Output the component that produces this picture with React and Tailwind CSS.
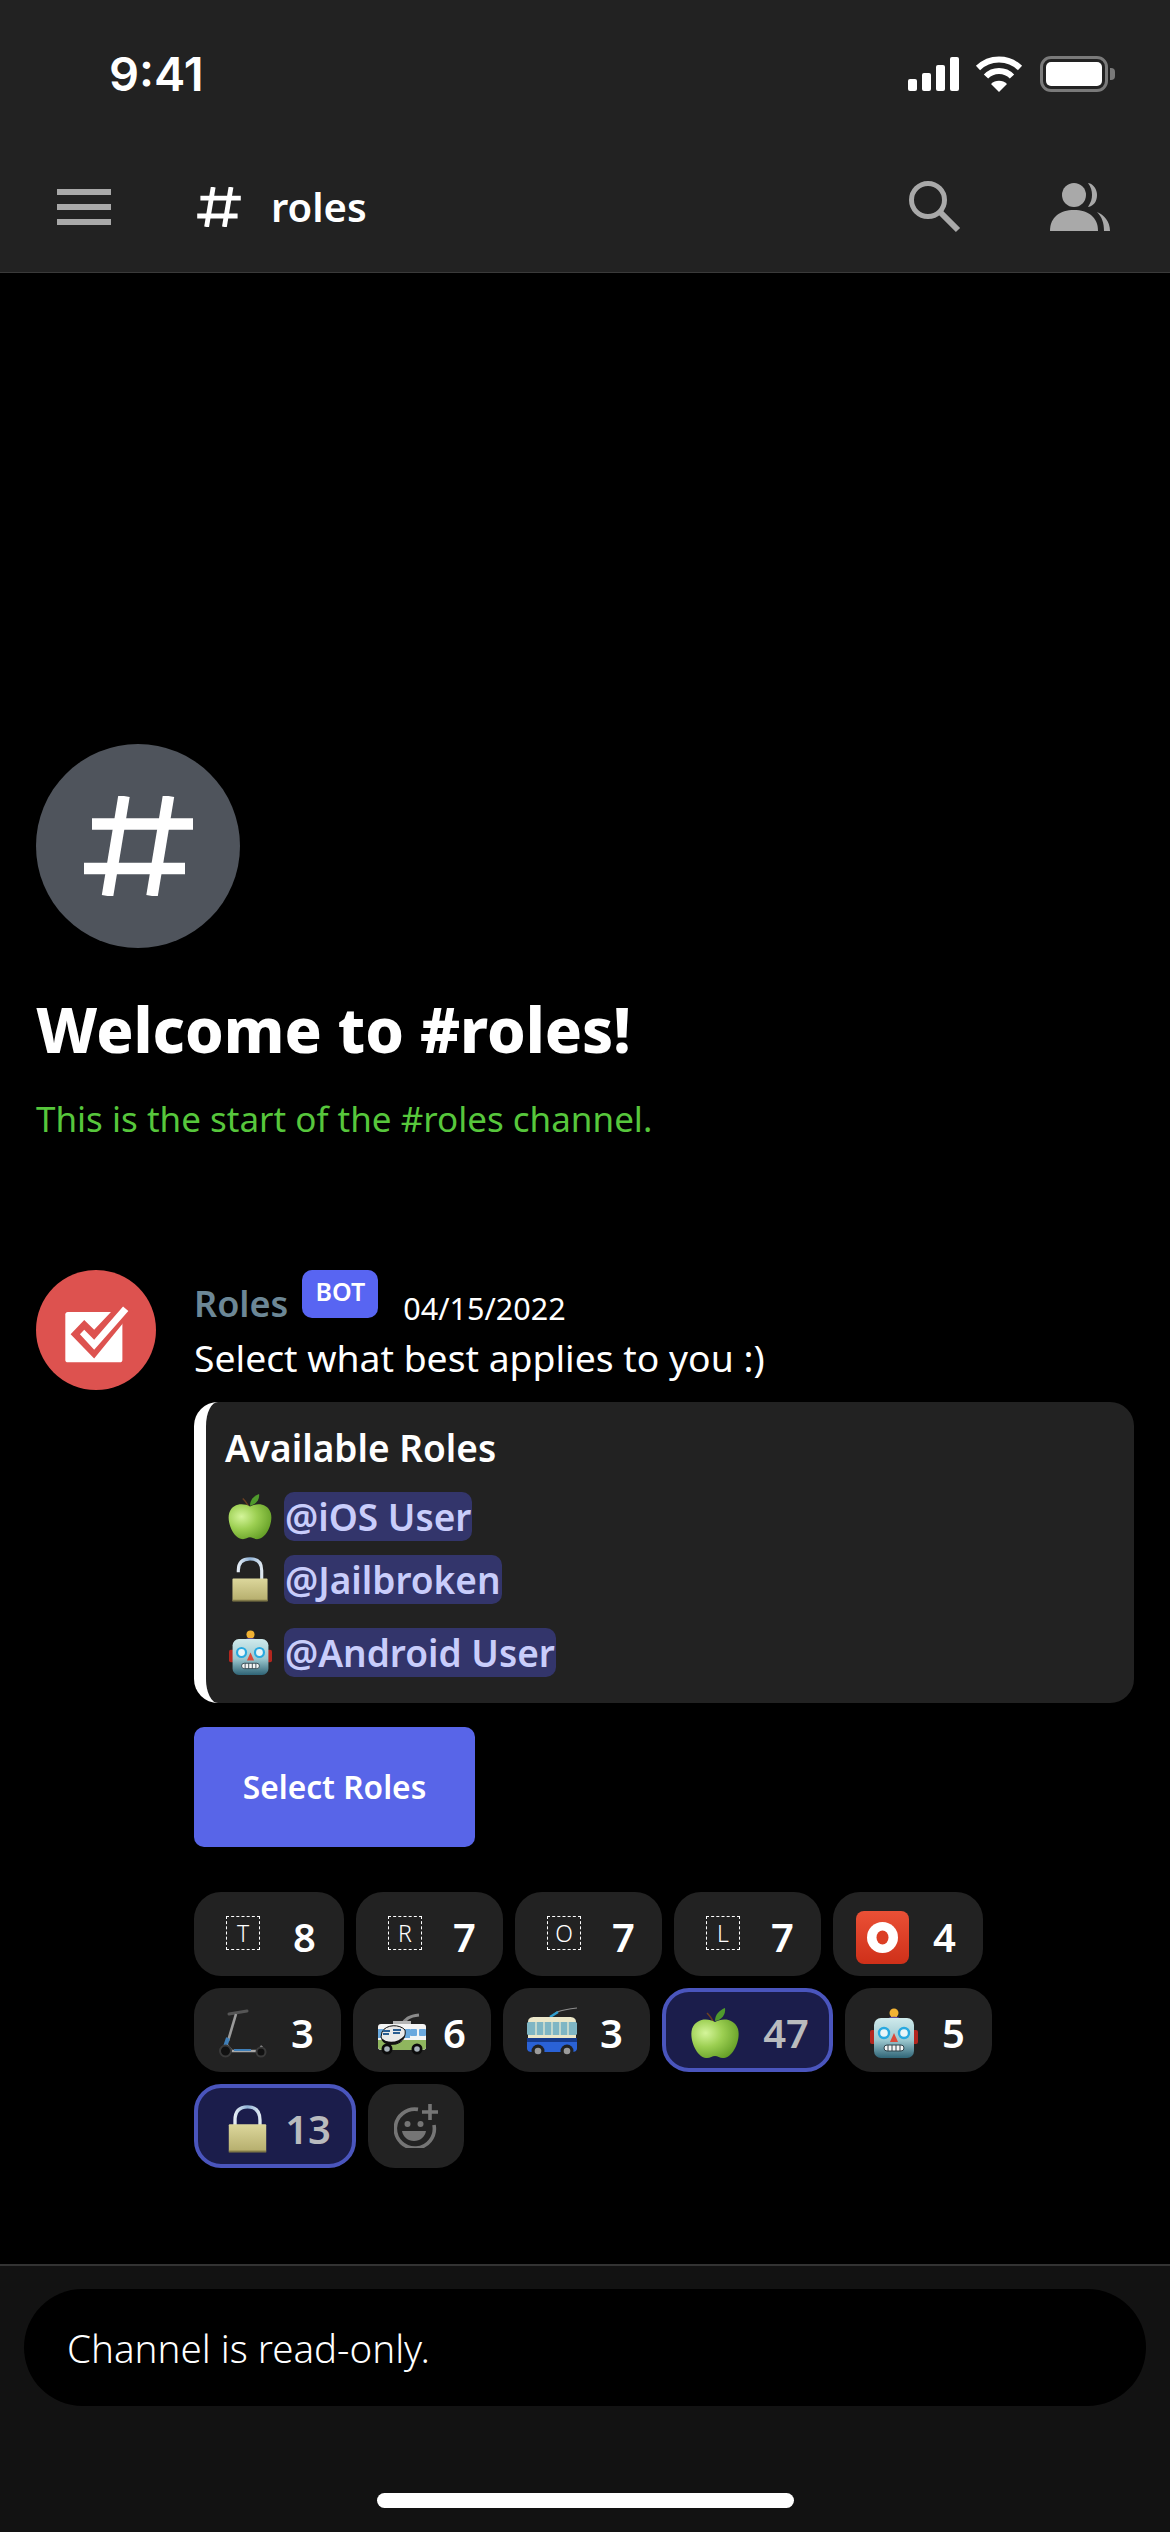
const FONT = "font-['Noto_Sans',sans-serif]";

function Apple({ className }) {
  return (
    <svg viewBox="0 0 48 52" className={className}>
      <defs>
        <radialGradient id="appleG" cx="0.3" cy="0.35" r="0.8">
          <stop offset="0" stopColor="#d4f59a" />
          <stop offset="0.45" stopColor="#9ccf52" />
          <stop offset="1" stopColor="#5f9a22" />
        </radialGradient>
      </defs>
      <path d="M22 15 C21 11 19 9 16 6" stroke="#6b3f22" strokeWidth="1.6" fill="none" />
      <path d="M24 14 C24 7 29 3 34 1 C35 7 31 13 24 14Z" fill="#4f9a2c" />
      <path d="M24 15 C17 11 5 11 1 22 C-2 33 6 50 15 51 C19 51.500 21 49 24 49 C27 49 29 51.500 33 51 C42 50 50 33 47 22 C43 11 31 11 24 15Z" fill="url(#appleG)" />
    </svg>
  );
}

function Lock({ open, className }) {
  return (
    <svg viewBox="0 0 40 50" className={className}>
      <defs>
        <linearGradient id={open ? "lockA" : "lockB"} x1="0" y1="0" x2="0" y2="1">
          <stop offset="0" stopColor="#dcd79c" />
          <stop offset="1" stopColor="#b5ad6c" />
        </linearGradient>
        <linearGradient id={open ? "shackA" : "shackB"} x1="0" y1="0" x2="1" y2="0">
          <stop offset="0" stopColor="#e4ecf4" />
          <stop offset="0.5" stopColor="#8fb2d6" />
          <stop offset="1" stopColor="#dfe8f0" />
        </linearGradient>
      </defs>
      {open ? (
        <path d="M7 17 L7 15 C7 6 12 2 20 2 C28 2 33 6 33 15 L33 26" fill="none" stroke="url(#shackA)" strokeWidth="3.500" />
      ) : (
        <path d="M7 24 L7 16 C7 6 12 2 20 2 C28 2 33 6 33 16 L33 24" fill="none" stroke="url(#shackB)" strokeWidth="3.500" />
      )}
      <rect x="0.500" y={open ? 24 : 20} width="39" height={open ? 25 : 29} rx="1" fill={open ? "url(#lockA)" : "url(#lockB)"} />
      <rect x="0.500" y="47.500" width="39" height="2" fill="#7f7848" />
    </svg>
  );
}

function Robot({ className }) {
  return (
    <svg viewBox="0 0 48 50" className={className}>
      <defs>
        <linearGradient id="robotG" x1="0" y1="0" x2="0" y2="1">
          <stop offset="0" stopColor="#cfeaec" />
          <stop offset="0.55" stopColor="#9cc8cf" />
          <stop offset="1" stopColor="#2f6476" />
        </linearGradient>
      </defs>
      <rect x="0" y="22" width="6" height="14" rx="2" fill="#b3261e" />
      <rect x="42" y="22" width="6" height="14" rx="2" fill="#b3261e" />
      <circle cx="24" cy="5" r="4.500" fill="#f2b233" />
      <path d="M18 11 C18 8 30 8 30 11 L30 13 L18 13Z" fill="#5b4a9c" />
      <rect x="4" y="10" width="40" height="40" rx="7" fill="url(#robotG)" />
      <circle cx="14" cy="25" r="5" fill="#eaf6f8" stroke="#29a9e0" strokeWidth="2.400" />
      <circle cx="34" cy="25" r="5" fill="#eaf6f8" stroke="#29a9e0" strokeWidth="2.400" />
      <path d="M24 25 L28 34 L20 34Z" fill="#dc4a3a" />
      <rect x="14" y="37" width="20" height="6" rx="3" fill="#f3f5f5" stroke="#30454d" strokeWidth="1" />
      <path d="M18 37v6M22 37v6M26 37v6M30 37v6" stroke="#30454d" strokeWidth="1" />
    </svg>
  );
}

function OButton({ className }) {
  return (
    <svg viewBox="0 0 53 53" className={className}>
      <defs>
        <linearGradient id="oG" x1="0" y1="0" x2="0" y2="1">
          <stop offset="0" stopColor="#ea5036" />
          <stop offset="1" stopColor="#cf3019" />
        </linearGradient>
      </defs>
      <rect width="53" height="53" rx="8" fill="url(#oG)" />
      <circle cx="26.500" cy="26.500" r="15.500" fill="#fff" />
      <ellipse cx="26.500" cy="26.500" rx="6" ry="7" fill="#dc3e24" />
    </svg>
  );
}

function Scooter({ className }) {
  return (
    <svg viewBox="0 0 48 50" className={className}>
      <path d="M10 6 L28 3" stroke="#555" strokeWidth="3" strokeLinecap="round" />
      <path d="M17 6 L9 33" stroke="#9a9a9a" strokeWidth="2.600" />
      <path d="M9 30 L6 39" stroke="#3f7fb8" strokeWidth="4" />
      <path d="M8 37 L13 43 L39 43 L43 38" stroke="#a8a8a8" strokeWidth="2.400" fill="none" />
      <path d="M15 42 L32 42" stroke="#3f7fb8" strokeWidth="2" />
      <circle cx="6.500" cy="43" r="5.500" fill="#111" stroke="#3a3a3a" strokeWidth="2" />
      <circle cx="42" cy="44" r="4.500" fill="#111" stroke="#3a3a3a" strokeWidth="2" />
    </svg>
  );
}

function GreenBus({ className }) {
  return (
    <svg viewBox="0 0 48 44" className={className}>
      <path d="M24 12 C27 6 31 3 41 2" stroke="#8a8a8a" strokeWidth="3" fill="none" />
      <rect x="15" y="8" width="18" height="6" fill="#b5b5b5" />
      <rect x="0" y="11" width="48" height="26" rx="3" fill="#f4f5f5" />
      <path d="M0 27 H48 V34 C48 36 46 37 44 37 H4 C2 37 0 36 0 34Z" fill="#8fb65e" />
      <rect x="0" y="16" width="32" height="9" fill="#6aa9de" />
      <rect x="32" y="16" width="7" height="7" rx="1" fill="#6aa9de" />
      <rect x="41" y="16" width="7" height="7" rx="1" fill="#6aa9de" />
      {/* troll face stuck on the side */}
      <path d="M4 19 C8 11 22 11 27 17 C28 22 26 29 18 31 C12 31 4 28 3 24Z" fill="#e9e9e9" stroke="#111" strokeWidth="1" />
      <path d="M5 18h7M5 21h6M15 17h8M15 20h7" stroke="#2a5d91" strokeWidth="1.800" />
      <path d="M3 25 C10 31 20 30 27 22 C26 27 20 32 12 32 C7 31 4 29 3 25Z" fill="#111" />
      <circle cx="9" cy="36" r="5.500" fill="#0c0c0c" />
      <circle cx="9" cy="36" r="2.800" fill="#a7b2ba" />
      <circle cx="39" cy="36" r="5.500" fill="#0c0c0c" />
      <circle cx="39" cy="36" r="2.800" fill="#a7b2ba" />
    </svg>
  );
}

function BlueBus({ className }) {
  return (
    <svg viewBox="0 0 54 52" className={className}>
      <path d="M28 8 L32 5 C38 3 44 2 52 1" stroke="#8d8d8d" strokeWidth="1.200" fill="none" />
      <path d="M25 10 L33 5" stroke="#2f9fd0" strokeWidth="2.500" />
      <path d="M3 15 C3 11 6 10 10 10 H44 C48 10 51 11 51 15 V34 H3Z" fill="#ebe7c9" />
      <path d="M2 31 H52 V41 C52 44 50 45 47 45 H7 C4 45 2 44 2 41Z" fill="#2a62d6" />
      <path d="M2 31 H52 V35 H2Z" fill="#153a8c" />
      <rect x="2" y="15" width="50" height="13" rx="1.500" fill="#7fb6c4" />
      <path d="M11 15v13M19 15v13M27 15v13M35 15v13M43 15v13" stroke="#dfe6d2" strokeWidth="1.400" />
      <circle cx="13" cy="44" r="6.500" fill="#222" />
      <circle cx="13" cy="44" r="3.300" fill="#9b9b9b" />
      <circle cx="42" cy="44" r="6.500" fill="#222" />
      <circle cx="42" cy="44" r="3.300" fill="#9b9b9b" />
    </svg>
  );
}

function Hash({ className, strokeWidth = 12 }) {
  return (
    <svg viewBox="0 0 109 100" className={className} fill="none" stroke="#fff" strokeWidth={strokeWidth}>
      <path d="M40 0 L23.500 100" />
      <path d="M84.500 0 L68 100" />
      <path d="M8 28 H109" />
      <path d="M0 72.500 H101" />
    </svg>
  );
}

function AddReaction() {
  return (
    <svg viewBox="0 0 44 44" className="w-[44px] h-[44px]" fill="none" stroke="#757575">
      <path d="M24 5.400 A19.500 19.500 0 1 0 40 21" strokeWidth="3.600" />
      <circle cx="13.500" cy="20" r="3" fill="#757575" stroke="none" />
      <circle cx="26.500" cy="20" r="3" fill="#757575" stroke="none" />
      <path d="M8 27 H32 C31 33 26 37 20 37 C14 37 9 33 8 27Z" fill="#757575" stroke="none" />
      <path d="M36 0 V16 M28 8 H44" strokeWidth="3.600" />
    </svg>
  );
}

function Dashed({ letter }) {
  return (
    <div className="w-[34px] h-[34px] mb-[2px] border-[1.5px] border-dashed border-white flex items-center justify-center text-[23px] leading-none text-white font-light">
      {letter}
    </div>
  );
}

const ROW_REACTIONS = [
  { key: "T", width: "w-[150px]", count: 8, emoji: <Dashed letter="T" />, pad: "pr-[28px]" },
  { key: "R", width: "w-[147px]", count: 7, emoji: <Dashed letter="R" />, pad: "pr-[27px]" },
  { key: "O", width: "w-[147px]", count: 7, emoji: <Dashed letter="O" />, pad: "pr-[27px]" },
  { key: "L", width: "w-[147px]", count: 7, emoji: <Dashed letter="L" />, pad: "pr-[27px]" },
  { key: "ob", width: "w-[150px]", count: 4, emoji: <OButton className="w-[53px] h-[53px] mt-[7px] shrink-0" />, pad: "pr-[27px]" },
  { key: "sc", width: "w-[147px]", count: 3, emoji: <Scooter className="w-[48px] h-[50px] mt-[6px]" />, pad: "pr-[27px]" },
  { key: "gb", width: "w-[138px]", count: 6, emoji: <GreenBus className="w-[48px] h-[44px] mt-[9px]" />, pad: "pr-[25px]" },
  { key: "bb", width: "w-[147px]", count: 3, emoji: <BlueBus className="w-[54px] h-[52px] mt-[6px] shrink-0" />, pad: "pr-[27px]" },
  { key: "ap", width: "w-[171px]", count: 47, emoji: <Apple className="w-[48px] h-[52px] mt-[6px]" />, on: true, pad: "pr-[20px]" },
  { key: "ro", width: "w-[147px]", count: 5, emoji: <Robot className="w-[48px] h-[50px] mt-[6px]" />, pad: "pr-[27px]" },
  { key: "lk", width: "w-[162px]", count: 13, emoji: <Lock className="w-[39px] h-[48px] mt-[6px]" />, on: true, pad: "pr-[21px]" },
];

function Reaction({ item }) {
  return (
    <div
      className={`h-[84px] rounded-[27px] flex items-center justify-between ${item.width} ${item.pad} ${
        item.on ? "bg-[#1b1d4b] border-[4px] border-[#4a55bd] pl-[24px]" : "bg-[#222222] pl-[24px]"
      }`}
    >
      <div className="w-[50px] flex justify-center">{item.emoji}</div>
      <span className={`text-[40px] leading-[50px] mt-[6px] font-semibold ${item.on ? "text-[#b9bbbe]" : "text-white"}`}>
        {item.count}
      </span>
    </div>
  );
}

function Mention({ children }) {
  return (
    <span className="h-[49px] flex items-center px-[1px] rounded-[10px] bg-[#33356b] text-[#c9cdfb] text-[37px] leading-[49px] font-semibold">
      {children}
    </span>
  );
}

export default function App() {
  return (
    <div className={`w-[1170px] h-[2532px] flex flex-col bg-black overflow-hidden ${FONT}`}>
      <div className="h-[273px] bg-[#222222] border-b border-[#3a3a3a] shrink-0">
        {/* status bar */}
        <div className="h-[148px] flex items-center pl-[109px] pr-[55px]">
          <span className="text-white text-[47px] font-semibold font-['Inter',sans-serif]">9:41</span>
          <div className="ml-auto flex items-center">
            <div className="flex items-end gap-[5px] h-[34px]">
              <div className="w-[9px] h-[12px] bg-white rounded-[2px]" />
              <div className="w-[9px] h-[18px] bg-white rounded-[2px]" />
              <div className="w-[9px] h-[26px] bg-white rounded-[2px]" />
              <div className="w-[9px] h-[34px] bg-white rounded-[2px]" />
            </div>
            <svg viewBox="0 0 48 36" className="w-[48px] h-[36px] ml-[16px]" fill="none" stroke="#fff">
              <path d="M3 12 A30 30 0 0 1 45 12" strokeWidth="6" />
              <path d="M11 20.500 A18 18 0 0 1 37 20.500" strokeWidth="6" />
              <path d="M24 36 L16 28 A11.500 11.500 0 0 1 32 28 Z" fill="#fff" stroke="none" />
            </svg>
            <div className="ml-[17px] w-[68px] h-[36px] rounded-[11px] border-[3px] border-[#7a7a7a] p-[3px]">
              <div className="w-full h-full rounded-[5px] bg-white" />
            </div>
            <div className="ml-[2px] w-[5px] h-[12px] rounded-r-[4px] bg-[#7a7a7a]" />
          </div>
        </div>
        {/* nav */}
        <div className="h-[118px] flex items-center pl-[57px] pr-[60px]">
          <div className="w-[54px] flex flex-col gap-[9px]">
            <div className="h-[6px] bg-[#a9a9a9]" />
            <div className="h-[6px] bg-[#a9a9a9]" />
            <div className="h-[6px] bg-[#a9a9a9]" />
          </div>
          <Hash className="w-[44px] h-[40px] ml-[86px]" strokeWidth={12} />
          <span className="ml-[30px] text-white text-[40px] font-semibold">roles</span>
          <svg viewBox="0 0 52 52" className="w-[52px] h-[52px] ml-auto" fill="none" stroke="#a9a9a9">
            <circle cx="19" cy="19" r="16.500" strokeWidth="5" />
            <path d="M31 31 L49 49" strokeWidth="6" />
          </svg>
          <svg viewBox="0 0 60 48" className="w-[60px] h-[48px] ml-[89px]" fill="#a9a9a9">
            <circle cx="24" cy="12" r="12" />
            <path d="M0 48 C0 34 10 27 24 27 C38 27 48 34 48 48Z" />
            <path d="M38 0 C44 1 47 7 47 12 C47 18 44 23 38 24 C41 19 42 16 42 12 C42 8 41 4 38 0Z" />
            <path d="M47 29 C54 32 60 38 60 48 L54 48 C54 40 52 34 47 29Z" />
          </svg>
        </div>
      </div>

      <div className="flex-1 flex flex-col justify-end pb-[96px]">
        {/* welcome */}
        <div className="px-[36px]">
          <div className="w-[204px] h-[204px] rounded-full bg-[#4f545c] flex items-center justify-center">
            <Hash className="w-[109px] h-[100px]" strokeWidth={11.500} />
          </div>
          <h1 className="mt-[43px] text-white text-[61.5px] leading-[76px] font-extrabold">Welcome to #roles!</h1>
          <p className="mt-[28px] text-[#57c73c] text-[35px] leading-[48px]">This is the start of the #roles channel.</p>
        </div>

        {/* message */}
        <div className="mt-[127px] flex pl-[36px] pr-[36px]">
          <div className="w-[120px] h-[120px] rounded-full bg-[#dd524f] flex items-center justify-center shrink-0">
            <svg viewBox="60 60 220 200" className="w-[73px] h-[67px] mt-[4px]">
              <rect x="76" y="98" width="172" height="152" rx="8" fill="#fff" />
              <path d="M92 165 L133 122 L163 152 L240 70 L280 95 L163 238 Z" fill="#dd524f" />
              <path d="M120 165 L133 152 L163 182 L250 82 L266 95 L163 212 Z" fill="#fff" />
            </svg>
          </div>
          <div className="ml-[38px] flex-1 min-w-0">
            <div className="h-[56px] flex items-end">
              <span className="text-[#6c8796] text-[36px] leading-[48px] font-semibold mb-[-2px]">Roles</span>
              <span className="ml-[14px] self-start w-[76px] h-[48px] rounded-[10px] bg-[#5865f2] text-white text-[25px] font-semibold flex items-center justify-center pb-[4px]">
                BOT
              </span>
              <span className="ml-[25px] text-white text-[30.5px] leading-[36px]">04/15/2022</span>
            </div>
            <p className="mt-[8px] text-white text-[37.3px] leading-[48px]">Select what best applies to you :)</p>

            {/* embed */}
            <div className="mt-[20px] rounded-[24px] border-l-[12px] border-white bg-[#222222] pl-[19px] pt-[21px] pb-[26px]">
              <div className="text-white text-[37px] leading-[50px] font-semibold">Available Roles</div>
              <div className="mt-[19px] flex items-center gap-[9px]">
                <div className="w-[50px] flex justify-center"><Apple className="w-[44px] h-[47px]" /></div>
                <Mention>@iOS User</Mention>
              </div>
              <div className="mt-[14px] flex items-center gap-[9px]">
                <div className="w-[50px] flex justify-center"><Lock open className="w-[36px] h-[49px]" /></div>
                <Mention>@Jailbroken</Mention>
              </div>
              <div className="mt-[24px] flex items-center gap-[9px]">
                <div className="w-[50px] flex justify-center"><Robot className="w-[43px] h-[45px]" /></div>
                <Mention>@Android User</Mention>
              </div>
            </div>

            <button className="mt-[24px] w-[281px] h-[120px] rounded-[10px] bg-[#5865e8] text-white text-[31.7px] font-semibold">
              Select Roles
            </button>

            {/* reactions */}
            <div className="mt-[45px] flex flex-wrap gap-[12px]">
              {ROW_REACTIONS.map((r) => (
                <Reaction key={r.key} item={r} />
              ))}
              <div className="w-[96px] h-[84px] rounded-[27px] bg-[#222222] flex items-center justify-center">
                <AddReaction />
              </div>
            </div>
          </div>
        </div>
      </div>

      {/* footer */}
      <div className="h-[268px] shrink-0 bg-[#121212] border-t-[2px] border-[#333333] pt-[23px] px-[24px]">
        <div className="h-[117px] rounded-full bg-black flex items-center pl-[43px] pt-[2px] text-white text-[38.5px] font-light">
          Channel is read-only.
        </div>
        <div className="mt-[87px] mx-auto w-[417px] h-[15px] rounded-full bg-white" />
      </div>
    </div>
  );
}
